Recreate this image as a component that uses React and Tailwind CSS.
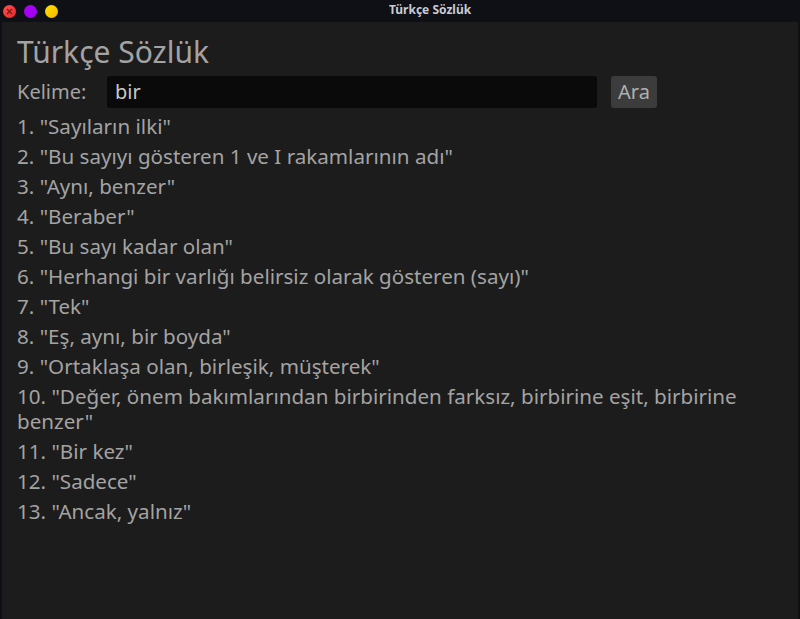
const defs = [
  "Sayıların ilki",
  "Bu sayıyı gösteren 1 ve I rakamlarının adı",
  "Aynı, benzer",
  "Beraber",
  "Bu sayı kadar olan",
  "Herhangi bir varlığı belirsiz olarak gösteren (sayı)",
  "Tek",
  "Eş, aynı, bir boyda",
  "Ortaklaşa olan, birleşik, müşterek",
  "Değer, önem bakımlarından birbirinden farksız, birbirine eşit, birbirine benzer",
  "Bir kez",
  "Sadece",
  "Ancak, yalnız",
];

function Dot({ color, children }) {
  return (
    <span
      className={`grid h-[13px] w-[13px] place-items-center rounded-full ${color}`}
    >
      {children}
    </span>
  );
}

export default function App() {
  return (
    <div className="flex h-[619px] w-[800px] flex-col bg-[#0f1015] font-['Noto_Sans',sans-serif]">
      {/* title bar */}
      <div className="relative flex h-[22px] items-center gap-2 px-[3px]">
        <Dot color="bg-gradient-to-br from-[#ff5050] to-[#e02a2a]">
          <svg width="9" height="9" viewBox="0 0 9 9">
            <path d="M2 2 L7 7 M7 2 L2 7" stroke="#8a1010" strokeWidth="1.2" />
          </svg>
        </Dot>
        <Dot color="bg-gradient-to-br from-[#b000ff] to-[#9a00e6]" />
        <Dot color="bg-gradient-to-br from-[#ffe000] to-[#f5b800]" />
        <div className="absolute left-[389px] top-[1px] text-[12px] font-bold text-[#c9ccd4]">
          Türkçe Sözlük
        </div>
      </div>

      {/* window body */}
      <div className="mx-[2px] flex-1 bg-[#1c1c1c] px-[15px] pt-[12px] text-[#a3a3a3]">
        <h1 className="text-[30px] leading-[36px]">Türkçe Sözlük</h1>
        <div className="mt-[6px] flex h-[32px] items-center text-[20px]">
          <span className="w-[90px]">Kelime:</span>
          <div className="flex h-[32px] w-[490px] items-center rounded-[3px] bg-[#0a0a0a] px-[8px] text-[#c8c8c8]">
            bir
          </div>
          <button className="ml-[14px] h-[32px] rounded-[3px] bg-[#3c3c3c] px-[7px] text-[#b0b0b0]">
            Ara
          </button>
        </div>
        <ol className="mt-[6px] flex flex-col gap-[5px] pr-[20px] text-[20.6px] leading-[25px]">
          {defs.map((d, i) => (
            <li key={i}>
              {i + 1}. "{d}"
            </li>
          ))}
        </ol>
      </div>
    </div>
  );
}
